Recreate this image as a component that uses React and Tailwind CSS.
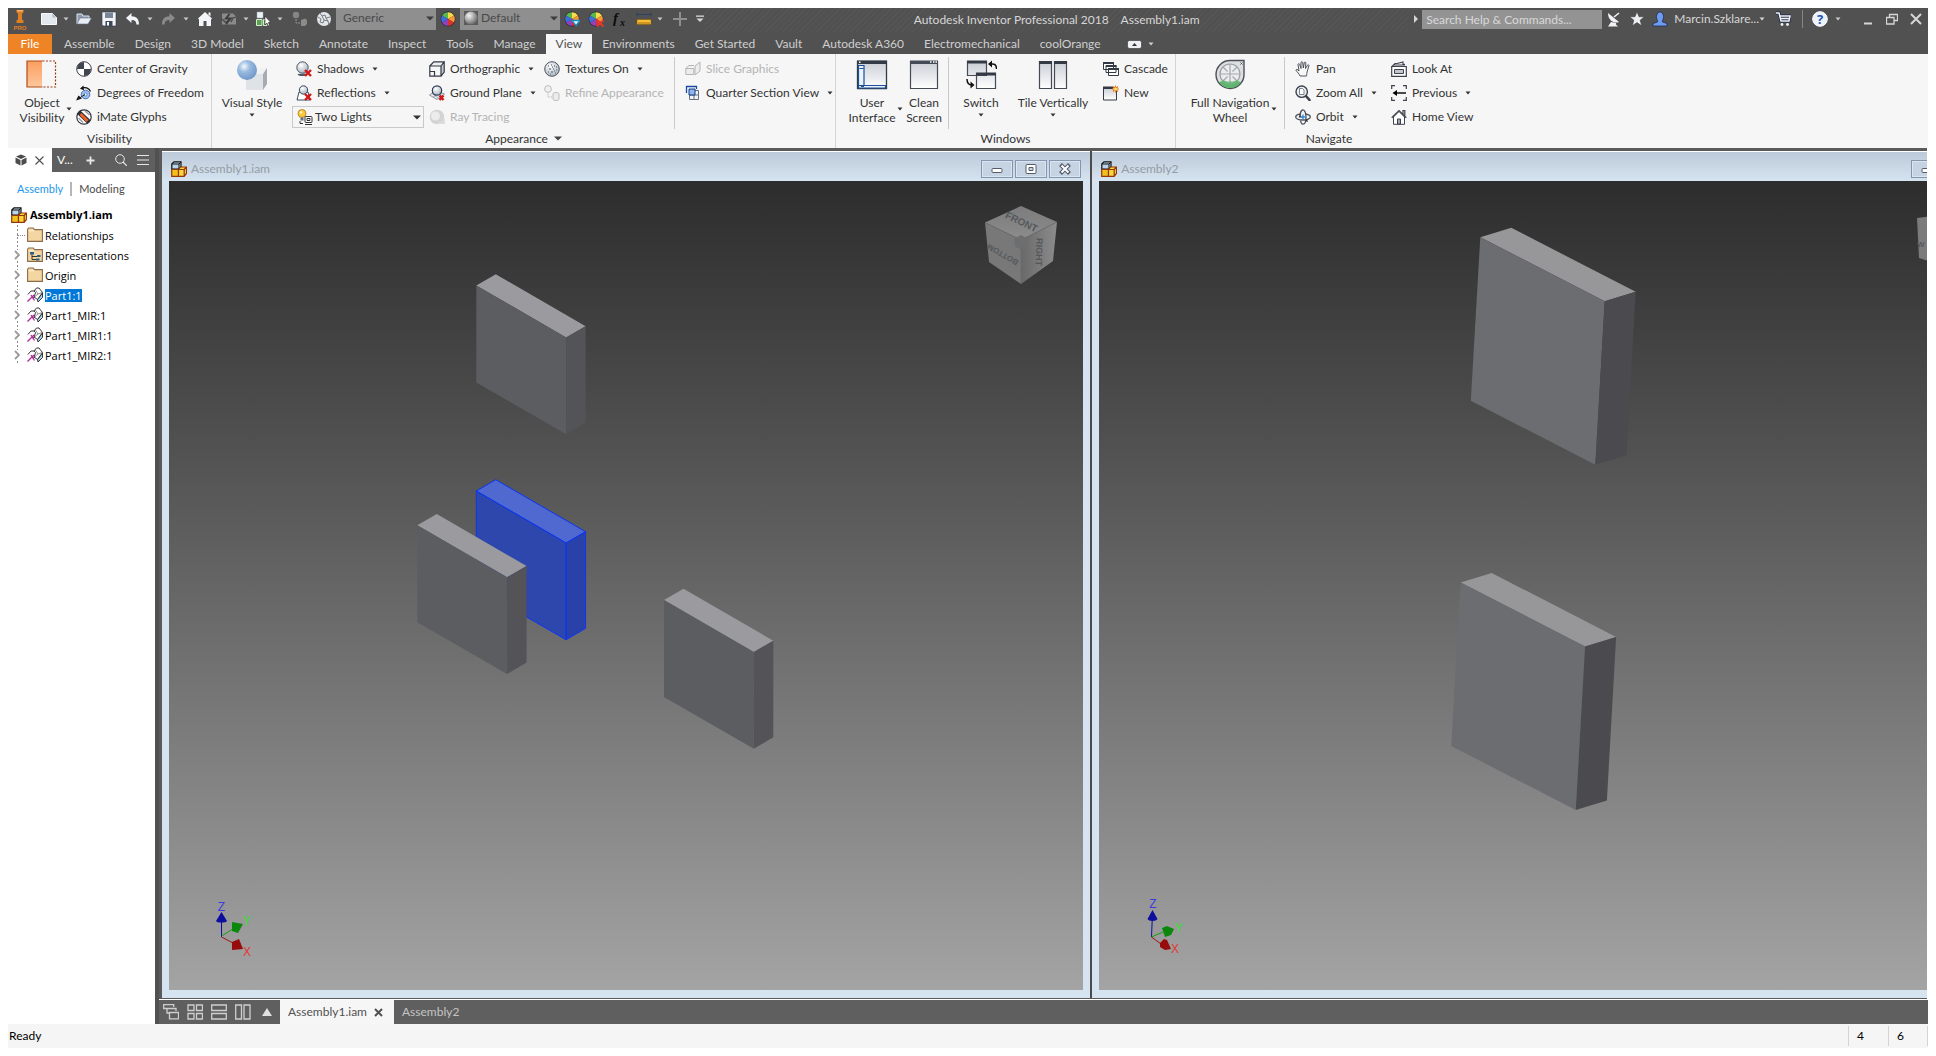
import React, { useState } from 'react';

const Svg = ({ size = 16, children, className = '' }) => (
  <svg width={size} height={size} viewBox={`0 0 ${size} ${size}`} fill="none" className={`shrink-0 ${className}`} aria-hidden="true">
    {children}
  </svg>
);

const Arrow = ({ className = '' }) => (
  <svg width="6" height="4" viewBox="0 0 6 4" className={`shrink-0 ${className}`} aria-hidden="true">
    <path d="M0.5 0.5h5L3 3.5z" fill="currentColor" />
  </svg>
);

const RedX = ({ x = 9, y = 9 }) => (
  <path d={`M${x} ${y}l6 6M${x + 6} ${y}l-6 6`} stroke="#d01818" strokeWidth="2.4" />
);

// Shared gradients used by several icons
const Defs = () => (
  <svg width="0" height="0" className="absolute" aria-hidden="true">
    <defs>
      <linearGradient id="steel" x1="0" y1="0" x2="0" y2="1">
        <stop offset="0" stopColor="#c9cdd4" />
        <stop offset="1" stopColor="#ffffff" />
      </linearGradient>
      <linearGradient id="orangeFade" x1="0" y1="0" x2="0" y2="1">
        <stop offset="0" stopColor="#fb9e5f" />
        <stop offset="1" stopColor="#fdc79d" />
      </linearGradient>
      <radialGradient id="ball" cx="0.38" cy="0.32" r="0.7">
        <stop offset="0" stopColor="#ffffff" />
        <stop offset="1" stopColor="#a9b4bf" />
      </radialGradient>
      <radialGradient id="blueBall" cx="0.36" cy="0.32" r="0.7">
        <stop offset="0" stopColor="#f6faff" />
        <stop offset="0.4" stopColor="#9bbbe0" />
        <stop offset="1" stopColor="#6f98c9" />
      </radialGradient>
      <radialGradient id="grayBall" cx="0.36" cy="0.32" r="0.7">
        <stop offset="0" stopColor="#f4f4f4" />
        <stop offset="1" stopColor="#6b6b6b" />
      </radialGradient>
      <linearGradient id="cubeRight" x1="0" y1="0" x2="1" y2="0">
        <stop offset="0" stopColor="#696969" />
        <stop offset="1" stopColor="#8c8c8c" />
      </linearGradient>
      <linearGradient id="cubeTop" x1="0" y1="0" x2="0" y2="1">
        <stop offset="0" stopColor="#7c7c7c" />
        <stop offset="1" stopColor="#8c8c8c" />
      </linearGradient>
    </defs>
  </svg>
);

/* ---------- quick access icons ---------- */

const InventorLogo = () => (
  <svg width="14" height="21" viewBox="0 0 14 21" aria-hidden="true">
    <path d="M3.5 1h7v2.6L9 4.5v6l1.5 1v2.5h-7v-2.5L5 10.500v-6L3.500 3.600z" fill="#e07f22" />
    <path d="M3.500 1h7l-1 1.500h-5z" fill="#f8b36b" />
    <text x="7" y="20.500" textAnchor="middle" fontSize="6" fontWeight="700" fill="#e07f22" fontFamily="Liberation Sans, sans-serif">PRO</text>
  </svg>
);

const NewIcon = () => (
  <Svg><path d="M0.500 2.500h11l4 4v7h-15z" fill="#e3e7ee" stroke="#f8f9fb" /><path d="M11.500 2.500v4h4z" fill="#aeb7c6" /></Svg>
);
const OpenIcon = () => (
  <Svg><path d="M1 13V3h5l1 2h6v2" fill="#8f9bad" stroke="#dfe5ee" /><path d="M1 13l3-6h11.500l-3.500 6z" fill="#e9eef5" stroke="#5d6f8a" strokeWidth="0.600" /></Svg>
);
const SaveIcon = () => (
  <Svg><path d="M1 1h14v14H2.500L1 13.500z" fill="#f1f3f7" stroke="#2a3550" strokeWidth="0.600" /><path d="M4 1.500h8V7H4z" fill="#7a8598" /><path d="M4.500 10h7v5h-7z" fill="#3c4658" /><path d="M6 11h2v3.500H6z" fill="#fff" /></Svg>
);
const UndoIcon = ({ color = '#f2f4f8', flip }) => (
  <svg width="16" height="16" viewBox="0 0 16 16" className={flip ? '-scale-x-100' : ''} aria-hidden="true">
    <path d="M1 7l5.500-5v3.200C11.500 5.200 14 8 14 13.500h-2.600C11.400 10.300 9.800 9 6.500 9v3z" fill={color} />
  </svg>
);
const HomeIcon = () => (
  <Svg><path d="M8 1l7 6.500-1 1V15H9.500v-5h-3v5H2V8.500l-1-1z" fill="#f3f5f9" /><path d="M11.500 1.500h2v4l-2-2z" fill="#f3f5f9" /></Svg>
);
const UpdateIcon = () => (
  <Svg><path d="M1 2.500h11l3 3v8H1z" fill="#8a8a8a" /><path d="M8.500 3L5 7.500h4.500L5 13" stroke="#3d3d3d" strokeWidth="2" /><path d="M1 8l3 3 3-1M15 6l-3 1-2 4" stroke="#474747" strokeWidth="1.300" /></Svg>
);
const SelectIcon = () => (
  <Svg><path d="M2 1h6v6H2z" fill="#f0f3f4" stroke="#9ab" strokeWidth="0.500" /><path d="M1.500 8.500h5.500v6H1.500zM8.500 8.500H12v6H8.500z" fill="#59a34d" stroke="#d7ead3" /><path d="M10 5v9l2-2 1.200 3 1.500-.6-1.300-2.900h2.400z" fill="#fff" stroke="#222" strokeWidth="0.600" /></Svg>
);
const TreeIcon = () => (
  <Svg><circle cx="4" cy="4" r="3.200" fill="#858585" /><path d="M4 8v4h4" stroke="#999" strokeDasharray="2 1" /><path d="M9 9l4-1.500L15 9v4l-2 2H9z" fill="#8b8b8b" /></Svg>
);
const GlobeIcon = () => (
  <Svg><circle cx="8" cy="8" r="7" fill="#e3e5e8" /><path d="M2 6l3 2-1 3 3 1 1-3 4 1 1 4M4 2l2 3 3-1 1 3 4-1M6 5l2 4M10 7l2 3" stroke="#6b7079" strokeWidth="0.900" /></Svg>
);
const WheelIcon = ({ children }) => (
  <Svg>
    <circle cx="8" cy="8" r="7.400" fill="#20252f" />
    <path d="M8 8L8 1.200A6.800 6.800 0 0 1 13.900 4.600z" fill="#f6dc4b" />
    <path d="M8 8L13.900 4.600A6.800 6.800 0 0 1 13.900 11.400z" fill="#f59a35" />
    <path d="M8 8L13.900 11.400A6.800 6.800 0 0 1 8 14.800z" fill="#d93030" />
    <path d="M8 8L8 14.800A6.800 6.800 0 0 1 2.100 11.400z" fill="#9440b8" />
    <path d="M8 8L2.100 11.400A6.800 6.800 0 0 1 2.100 4.600z" fill="#3f6ee0" />
    <path d="M8 8L2.100 4.600A6.800 6.800 0 0 1 8 1.200z" fill="#5cb64c" />
    {children}
  </Svg>
);
const FxIcon = () => (
  <svg width="16" height="16" viewBox="0 0 16 16" aria-hidden="true">
    <text x="1" y="12" fontSize="15" fontStyle="italic" fontWeight="700" fontFamily="Liberation Serif, serif" fill="#0c0c0c">f</text>
    <text x="8" y="15" fontSize="10" fontStyle="italic" fontWeight="700" fontFamily="Liberation Serif, serif" fill="#0c0c0c">x</text>
  </svg>
);
const MeasureIcon = () => (
  <Svg><path d="M1 3.500h14M1 1.500v4M15 1.500v4" stroke="#2b4163" /><path d="M1 8.500h14v5H1z" fill="#f7bd35" stroke="#7a4c00" strokeWidth="0.500" /><path d="M3 11v2M5 11v2M7 11v2M9 11v2M11 11v2M13 11v2" stroke="#8a5a00" strokeWidth="0.800" /></Svg>
);
const PlusIcon = () => (
  <Svg><path d="M8 1v14M1 8h14" stroke="#8f8f8f" strokeWidth="2" /></Svg>
);

/* ---------- ribbon icons, 16px ---------- */

const GravityIcon = () => (
  <Svg><circle cx="8" cy="8" r="7.300" fill="#fff" stroke="#3a3f48" /><path d="M8 8V1a7 7 0 0 0-7 7zM8 8v7a7 7 0 0 0 7-7z" fill="#3f444d" /></Svg>
);
const FreedomIcon = () => (
  <Svg><circle cx="9.500" cy="9.500" r="4.300" fill="#9fc0ee" stroke="#4471b5" /><circle cx="9.500" cy="9.500" r="1.600" fill="#e8f1ff" stroke="#4471b5" strokeWidth="0.700" /><path d="M5 3.500c4-2 8-.5 9.500 3" stroke="#111" strokeWidth="1.300" /><path d="M7.500 0.500L4 3.800l4 1.400zM0 15.500l6-2-3.500-3z" fill="#111" /><path d="M2 14l7-4.500" stroke="#222" /></Svg>
);
const IMateIcon = () => (
  <Svg><circle cx="8" cy="8" r="7.200" fill="#fff" stroke="#2f343c" strokeWidth="1.200" /><path d="M9 2l4.500 4M2.500 9L7 13.500" stroke="#9aa0aa" strokeWidth="1.600" /><path d="M2.500 3l10.500 10" stroke="#2b2f36" strokeWidth="4.600" /><path d="M4.500 5l7 7" stroke="#f0622a" strokeWidth="2.800" /></Svg>
);
const ShadowsIcon = () => (
  <Svg><path d="M1.500 13c1 2.500 6 2.500 8 1.500v-2z" fill="#4d586b" /><circle cx="6.500" cy="6.500" r="5.700" fill="url(#ball)" stroke="#4d5664" /><RedX /></Svg>
);
const ReflectionsIcon = () => (
  <Svg><path d="M1 15l2-8h9l2 8z" fill="#fff" stroke="#3b4a61" /><circle cx="7.500" cy="5" r="4.200" fill="url(#ball)" stroke="#3b4a61" /><RedX /></Svg>
);
const BulbIcon = () => (
  <Svg><circle cx="5" cy="4.500" r="4" fill="#fbc93c" stroke="#9c6a0a" strokeWidth="0.700" /><circle cx="4" cy="3.300" r="1.300" fill="#fff3c0" /><path d="M3.500 8.500h3v3h-3z" fill="#67707e" /><path d="M3 12v2.500h3" stroke="#333" /><rect x="8" y="7.500" width="7" height="6" rx="1" fill="#fff" stroke="#333" /><path d="M10 9.500h3v2h-3zM8 15.500h7" fill="#fff" stroke="#333" /></Svg>
);
const OrthoIcon = () => (
  <Svg><path d="M1 5l3.500-4H15L12 5z" fill="#eceef1" /><path d="M12 15l3-4V1l-3 4z" fill="#c3c8cf" /><path d="M0.800 5H12v10.200H0.800zM0.800 5l4-4.200h10.400L12 5M15.200 0.800V11L12 15.200" stroke="#333a45" strokeWidth="1.200" /><path d="M1 10.500h4.500V15" stroke="#333a45" strokeWidth="1.200" /></Svg>
);
const GroundIcon = () => (
  <Svg><path d="M0.500 10L7 5.500 15.500 9 8 14.500z" fill="#e8ebef" stroke="#8c95a3" /><path d="M3 8.500l7 5M6 6.500l7 4M4 12l8-5" stroke="#8c95a3" strokeWidth="0.700" /><circle cx="8" cy="5.500" r="4.700" fill="url(#ball)" stroke="#2e3d57" strokeWidth="1.200" /><path d="M10.500 10.500l4 4.500M14.500 10.500l-4 4.500" stroke="#d01818" strokeWidth="2.400" /></Svg>
);
const RayIcon = () => (
  <Svg><circle cx="8" cy="8" r="7.300" fill="#d3d3d3" /><circle cx="6.500" cy="7" r="4.500" fill="#ececec" /><path d="M9 14h6v-4" stroke="#dcdcdc" strokeWidth="2" /></Svg>
);
const TexturesIcon = () => (
  <Svg><circle cx="8" cy="8" r="7.300" fill="url(#ball)" stroke="#4f5661" /><path d="M4 5h1M7 4h1M10 5h1M5 8h2M9 8h1M12 9h1M4 11h1M7 11h2M11 12h1M8 6h1M10 10h1M6 13h1M12 6h1" stroke="#7b8490" strokeWidth="1.300" /></Svg>
);
const RefineIcon = () => (
  <Svg><circle cx="4" cy="4" r="3.400" fill="#efefef" stroke="#bdbdbd" /><path d="M4 8.500V12h4" stroke="#bdbdbd" strokeDasharray="2 1" /><path d="M9 9c0-2 6-2 6 0v5c0 2-6 2-6 0z" fill="#ececec" stroke="#bdbdbd" /></Svg>
);
const SliceIcon = () => (
  <Svg><path d="M0.800 7.500h8v6h-8zM0.800 7.500L4 4.500h5M10 5l5-4v9l-5 4z" fill="#ededed" stroke="#b4b4b4" /></Svg>
);
const QuarterIcon = () => (
  <Svg><path d="M4.500 5.500h9v9h-9zM4.500 10h9M9 5.500v9" fill="#f3f4f6" stroke="#67707e" /><path d="M4 4h6v6H4z" fill="#8fb7ee" stroke="#123a86" /><path d="M1.500 8V1.500h10V4" stroke="#1a49a8" strokeWidth="1.300" /></Svg>
);
const CascadeIcon = () => (
  <Svg>
    <path d="M0.500 1.500h10v7h-10zM3 4.500h10v7H3zM5.500 7.500h10v7h-10z" fill="#fff" stroke="#333a45" />
    <path d="M0 1h11v2H0zM3 4h10.500v2H3zM5 7h11v2H5z" fill="#333a45" />
  </Svg>
);
const NewWindowIcon = () => (
  <Svg><path d="M0.500 2.500h13v12.500h-13z" fill="url(#steel)" stroke="#333a45" /><path d="M0 1.500h10v2.500H0z" fill="#333a45" /><path d="M12.500 0.500v7M9 4h7M10 1.500l5 5M15 1.500l-5 5" stroke="#ec7a1c" strokeWidth="1.100" /><circle cx="12.500" cy="4" r="1.500" fill="#ffe45c" /></Svg>
);
const PanIcon = () => (
  <Svg><path d="M5 15c-.5-2-3-4-4.200-6 .7-1 2-.5 3.200 1L3 3.500c0-1 1.300-1.200 1.700 0L6 7.500V1.500c0-1 1.500-1 1.700 0L8.300 7l1-5.300c.2-1 1.600-.8 1.500.3L10.500 7.500l2-3.300c.6-.9 1.800-.3 1.400.7L12 11c0 2-.5 3-.5 4z" fill="#f7f7f7" stroke="#3d424b" strokeWidth="0.900" /></Svg>
);
const ZoomIcon = () => (
  <Svg><path d="M10.500 10.500l4 4.500" stroke="#3b414c" strokeWidth="2.600" strokeLinecap="round" /><circle cx="6.700" cy="6.700" r="5.700" fill="#e9f0f3" stroke="#3b414c" strokeWidth="1.400" /><path d="M4.500 3.500h3l1.500 1.500v4.500H4.500z" fill="#fff" stroke="#5b6470" strokeWidth="0.800" /></Svg>
);
const OrbitIcon = () => (
  <Svg><path d="M10 5c3 .3 5.300 1.500 5.300 3s-3 3-7.300 3-7.300-1.400-7.300-3S3 5.300 6 5" stroke="#4a515d" strokeWidth="1.300" /><path d="M5.500 11.500c.4 2.200 1.300 3.700 2.500 3.700 1.800 0 3-3.200 3-7.200S9.800 0.800 8 0.800 5 4 5 8" stroke="#4a515d" strokeWidth="1.300" /><path d="M3.500 8.500L5 6l1.800 2.500zM13 13l-3-1 2-2z" fill="#333" /><path d="M8 5.500v5M5.800 8h4.600" stroke="#2c86e0" strokeWidth="1.300" /></Svg>
);
const LookAtIcon = () => (
  <Svg><path d="M0.700 5.500h14.600v9.800H0.700z" fill="#fff" stroke="#3d424b" strokeWidth="1.200" /><path d="M3.500 8.500h9v4h-9z" fill="#c2c6cd" stroke="#3d424b" /><path d="M1 5.500l3-3h2l6-1.500v2l2 .5M3 4h11" stroke="#3d424b" strokeWidth="1.100" /></Svg>
);
const PreviousIcon = () => (
  <Svg><path d="M0.700 4V0.700H4M12 0.700h3.300V4M15.300 12v3.300H12M4 15.300H0.700V12" stroke="#3d424b" strokeWidth="1.200" /><path d="M5 8h10" stroke="#000" strokeWidth="1.400" /><path d="M1.500 8L6 5v6z" fill="#000" /></Svg>
);
const HomeViewIcon = () => (
  <Svg><path d="M2.500 8v7.300h11V8L8 2.500z" fill="#fff" stroke="#3d424b" /><path d="M0.700 8.700L8 1.500l7.300 7.200M12 5V1.500h1.800V7" stroke="#3d424b" strokeWidth="1.200" /><path d="M6.500 15v-5h3v5z" fill="#9fa5af" stroke="#3d424b" /></Svg>
);

/* ---------- ribbon icons, 32px ---------- */

const ObjectVisibilityIcon = () => (
  <Svg size={32}><path d="M1 2h15v26H1z" fill="url(#orangeFade)" /><path d="M16.500 2H1v26h15.500" stroke="#b04d1a" strokeWidth="1.200" /><path d="M16.500 2h13v26h-13" stroke="#a03c12" strokeWidth="1.200" strokeDasharray="2 1.500" /></Svg>
);
const VisualStyleIcon = () => (
  <Svg size={32}><path d="M10 15h17v16H10z" fill="#dfe2e6" /><path d="M10 15l6-6h15l-4 6z" fill="#f1f2f4" /><path d="M27 15l4-6v16l-4 6z" fill="#a7abb1" /><circle cx="11" cy="11" r="10" fill="url(#blueBall)" /></Svg>
);
const UserInterfaceIcon = () => (
  <Svg size={32}><path d="M1.500 2.500h29v27h-29z" fill="url(#steel)" stroke="#333a45" strokeWidth="1.300" /><path d="M1 1.500h30V5H1z" fill="#333a45" /><path d="M3 2.500h1.500V4H3z" fill="#fff" /><path d="M2.500 6.500h5.500v20H2.500zM2.500 26.500h27v2.500h-27z" fill="#eaf2ff" stroke="#1c4f93" strokeWidth="1.200" /><path d="M3.500 9.500h4M5 27.500h3" stroke="#1c4f93" /></Svg>
);
const CleanScreenIcon = () => (
  <Svg size={32}><path d="M2.500 2.500h27v27h-27z" fill="url(#steel)" stroke="#444b56" strokeWidth="1.200" /><path d="M2 1.500h28V5H2z" fill="#444b56" /><path d="M22 3h1.500M25 3h1.500M27.500 3H29" stroke="#fff" strokeWidth="1.300" /></Svg>
);
const SwitchIcon = () => (
  <Svg size={32}><path d="M2.500 2.500h19v14h-19zM11.500 14.500h19v15h-19z" fill="url(#steel)" stroke="#444b56" strokeWidth="1.200" /><path d="M2 1.500h20V4.500H2zM11 13.500h20v3H11z" fill="#333a45" /><path d="M26 5h1.500c3 0 4 2 4 5M2 20c0 4 1 6 5 6" stroke="#111" strokeWidth="1.500" /><path d="M23 5l4-3.500v7zM9.500 26L5.500 22.500v7z" fill="#111" /></Svg>
);
const TileIcon = () => (
  <Svg size={32}><path d="M2.500 2.500h12v27h-12zM17.500 2.500h12v27h-12z" fill="url(#steel)" stroke="#444b56" strokeWidth="1.200" /><path d="M2 2h13v3H2zM17 2h13v3H17z" fill="#333a45" /></Svg>
);
const WheelNavIcon = () => (
  <Svg size={32}>
    <path d="M16 1.500h14V15A14 14 0 1 1 16 1.500z" fill="#dcdedf" stroke="#4b5058" strokeWidth="1.400" />
    <path d="M5 23a13 13 0 0 0 22 0c-4-2-7 1-11 1s-7-3-11-1z" fill="#5cb76d" />
    <circle cx="16" cy="15" r="10" fill="#f1f2f2" fillOpacity="0.700" stroke="#9aa0a6" strokeWidth="1.200" />
    <path d="M16 5v20M6 15h20M9 8l4.500 4.500M23 8l-4.500 4.500M9 22l4.500-4.500M23 22l-4.500-4.500" stroke="#a2a8ae" strokeWidth="1.200" />
    <path d="M7 20a10 9 0 0 0 18 0c-3 2-6 2.500-9 2.500s-6-.5-9-2.500z" fill="#5cb76d" fillOpacity="0.800" />
    <path d="M26.500 3.500l2 2M28.500 3.500l-2 2" stroke="#444" strokeWidth="0.900" />
  </Svg>
);

/* ---------- browser icons ---------- */

const AssemblyIcon = () => (
  <Svg><path d="M0.800 3L3 0.800h7L10 6 8 8H0.800z" fill="#bcd4ea" stroke="#111" strokeWidth="1.200" /><path d="M1 3h7v5M8 3l2-2" stroke="#111" /><path d="M0.700 8.500h6.800v6.800H0.700z" fill="#f3c11d" stroke="#93380a" strokeWidth="1.200" /><path d="M7.500 8.500L9.500 6h6v6.500l-2.300 2.800H7.500zM7.500 8.500h5.700v6.800M13.200 8.500L15.500 6" fill="#fbd53d" stroke="#93380a" strokeWidth="1.200" /></Svg>
);
const FolderIcon = ({ tree }) => (
  <Svg>
    <path d="M0.600 14.400V2.200L1.700 1h4.600l1.100 1.600h8V14.400z" fill="#f3d6a2" stroke="#8c6c49" strokeWidth="1.100" />
    <path d="M1.500 3.800h6" stroke="#fff3da" />
    {tree && <path d="M3 5h4v2.500H3zM10 8h3.500v2H10zM9 11.500h3.500v2H9z" fill="#2f5f86" />}
    {tree && <path d="M5 7.500v5h4M5 9.500h5" stroke="#222" strokeWidth="0.900" />}
  </Svg>
);
const PartIcon = () => (
  <Svg>
    <path d="M10.500 12.500l5-6.500v4.500L11 15z" fill="#a9d4f0" stroke="#222" strokeWidth="0.900" />
    <path d="M6.500 4.500L9.500 1h2.500l3.500 4.500-5 7-3.500-2.500z" fill="#fff" stroke="#222" strokeWidth="0.900" />
    <path d="M8.500 3l2.500 4 4-1.500M11 7l-3.500 3" stroke="#666" strokeWidth="0.700" />
    <path d="M0.800 7.500L4 4h3l1.500 1.500-1 3.500L6 12" fill="#fff" stroke="#222" strokeWidth="0.900" />
    <path d="M0.500 14.500L7 8M4 8l3.500 5.500" stroke="#b8249f" strokeWidth="1.300" />
  </Svg>
);

/* ---------- title bar ---------- */

const QatButton = ({ label, className, children }) => (
  <button type="button" aria-label={label} className={`flex shrink-0 items-center justify-center ${className}`}>
    {children}
  </button>
);

const QatArrow = ({ label, className = 'w-4' }) => (
  <QatButton label={label} className={`h-5 text-[#c8c8c8] ${className}`}><Arrow /></QatButton>
);

const TitleSelect = ({ label, value, icon }) => (
  <div className="relative h-[22px] w-[100px] shrink-0 bg-[#8f8f8f] text-[#4a4a4a]">
    {icon && <span className="absolute left-1 top-[3px]"><Svg size={14}><path d="M0 0h14v14H0z" fill="#5b5b5b" /><circle cx="7" cy="7" r="6.500" fill="url(#grayBall)" /></Svg></span>}
    <select
      aria-label={label}
      defaultValue={value}
      className={`block h-[19px] w-full appearance-none bg-transparent text-xs leading-4 outline-none ${icon ? 'pl-[21px]' : 'pl-[7px]'}`}
    >
      <option>{value}</option>
    </select>
    <svg width="8" height="5" viewBox="0 0 8 5" className="pointer-events-none absolute right-[2px] top-2" aria-hidden="true"><path d="M0 0.500h8L4 4.500z" fill="#3c3c3c" /></svg>
  </div>
);

const TitleBar = () => (
  <header className="flex h-[26px] items-start bg-[#515151] text-[#d6d6d6]">
    <div className="flex h-[22px] shrink-0 items-center">
      <QatButton label="Inventor menu" className="mr-2 w-6"><InventorLogo /></QatButton>
      <QatButton label="New" className="w-[18px]"><NewIcon /></QatButton>
      <QatArrow label="New options" />
      <QatButton label="Open" className="w-5"><OpenIcon /></QatButton>
      <QatButton label="Save" className="w-[30px]"><SaveIcon /></QatButton>
      <QatButton label="Undo" className="w-[18px]"><UndoIcon /></QatButton>
      <QatArrow label="Undo list" />
      <QatButton label="Redo" className="w-5"><UndoIcon flip color="#8a8a8a" /></QatButton>
      <QatArrow label="Redo list" />
      <QatButton label="Home" className="w-[22px]"><HomeIcon /></QatButton>
      <QatButton label="Update" className="w-[26px]"><UpdateIcon /></QatButton>
      <QatArrow label="Update options" className="w-2" />
      <QatButton label="Select" className="w-[26px]"><SelectIcon /></QatButton>
      <QatArrow label="Select options" className="w-2" />
      <QatButton label="Component tree" className="w-8"><TreeIcon /></QatButton>
      <QatButton label="Material browser" className="mr-1 w-4"><GlobeIcon /></QatButton>
      <TitleSelect label="Material" value="Generic" />
      <QatButton label="Appearance browser" className="w-6"><WheelIcon /></QatButton>
      <TitleSelect label="Appearance" value="Default" icon />
      <QatButton label="Adjust appearance" className="w-6">
        <WheelIcon><path d="M8 9.500h8l-4 5z" fill="#e8f8ff" stroke="#1591cf" strokeWidth="1.300" /></WheelIcon>
      </QatButton>
      <QatButton label="Clear appearance" className="w-6">
        <WheelIcon><path d="M9 9l6.500 6.500M15.500 9L9 15.500" stroke="#e23a2c" strokeWidth="2" /></WheelIcon>
      </QatButton>
      <QatButton label="Parameters" className="w-6"><FxIcon /></QatButton>
      <QatButton label="Measure" className="w-6"><MeasureIcon /></QatButton>
      <QatArrow label="Measure options" className="w-2" />
      <QatButton label="Add" className="w-8"><PlusIcon /></QatButton>
      <QatButton label="Customize toolbar" className="w-2">
        <svg width="9" height="8" viewBox="0 0 9 8" aria-hidden="true"><path d="M0 0.800h9" stroke="#d6d6d6" strokeWidth="1.500" /><path d="M0.500 3.500h8l-4 4z" fill="#d6d6d6" /></svg>
      </QatButton>
    </div>
    <h1 className="flex h-6 min-w-0 flex-1 items-center justify-center gap-3 truncate bg-[repeating-linear-gradient(135deg,#565656_0_1px,#515151_1px_4px)] text-xs">
      <span>Autodesk Inventor Professional 2018</span>
      <span>Assembly1.iam</span>
    </h1>
    <div className="flex h-[22px] shrink-0 items-center">
      <QatButton label="Collapse search" className="w-[13px]">
        <svg width="4" height="8" viewBox="0 0 4 8" aria-hidden="true"><path d="M0 0l4 4-4 4z" fill="#d6d6d6" /></svg>
      </QatButton>
      <input
        type="search"
        aria-label="Search"
        placeholder="Search Help & Commands..."
        className="h-[19px] w-[180px] bg-[#939393] px-1 text-xs text-white outline-none placeholder:text-[#d8d8d8]"
      />
      <QatButton label="Subscription center" className="w-6">
        <Svg><path d="M2 2l11 9c-4 2-11-1-11-9z" fill="#f0f2f5" /><path d="M8 6l5-4" stroke="#f0f2f5" strokeWidth="1.600" /><path d="M2 15.500l3-4.500 5 1v1.500l2 2z" fill="#f0f2f5" /></Svg>
      </QatButton>
      <QatButton label="Favorites" className="w-[22px]">
        <Svg><path d="M8 0.800l2 5h5.300l-4.200 3.400 1.600 5.600L8 11.500l-4.700 3.300 1.600-5.600L0.700 5.800H6z" fill="#eef0f4" stroke="#333" strokeWidth="0.500" /></Svg>
      </QatButton>
      <button type="button" className="flex items-center gap-[2px] text-xs">
        <Svg className="mx-1"><path d="M1 15v-2.500l4.500-1.500V9.500C3.500 6.500 4.500 1 8 1s4.500 5.500 2.500 8.500V11l4.500 1.500V15z" fill="#6d9bf0" stroke="#1f2f58" strokeWidth="0.800" /></Svg>
        <span className="flex items-center">Marcin.Szklare...<Arrow /></span>
      </button>
      <QatButton label="App store" className="ml-[6px] w-6">
        <Svg><path d="M1 2h3l2 8h8l1-5H5" stroke="#18224b" strokeWidth="3" /><path d="M1 2h3l2 8h8l1-5H5M5.500 7.500h9" stroke="#f1f3f8" strokeWidth="1.500" /><circle cx="7" cy="13.500" r="1.400" fill="#f1f3f8" /><circle cx="12.500" cy="13.500" r="1.400" fill="#f1f3f8" /></Svg>
      </QatButton>
      <span className="ml-[7px] mr-[9px] h-[18px] w-px bg-[#858585]" />
      <QatButton label="Help" className="w-4">
        <svg width="16" height="16" viewBox="0 0 16 16" aria-hidden="true"><circle cx="8" cy="8" r="7.300" fill="#eef2fa" stroke="#fff" /><text x="8" y="12.500" textAnchor="middle" fontSize="13" fontWeight="700" fill="#2255b0" fontFamily="Open Sans, sans-serif">?</text></svg>
      </QatButton>
      <QatArrow label="Help options" className="w-5" />
      <QatButton label="Minimize" className="ml-2 h-6 w-6">
        <svg width="8" height="12" viewBox="0 0 8 12" aria-hidden="true"><path d="M0 10.500h8" stroke="#d6d6d6" strokeWidth="2" /></svg>
      </QatButton>
      <QatButton label="Restore" className="h-6 w-6">
        <Svg size={12}><path d="M3.500 5V1.500h8v6H8M0.500 4.500h7.500v6.500H0.500z" stroke="#d6d6d6" strokeWidth="1.300" /></Svg>
      </QatButton>
      <QatButton label="Close" className="h-6 w-6">
        <Svg size={12}><path d="M1 1l10 10M11 1L1 11" stroke="#d6d6d6" strokeWidth="2" /></Svg>
      </QatButton>
    </div>
  </header>
);

/* ---------- ribbon ---------- */

const TABS = [
  'Assemble', 'Design', '3D Model', 'Sketch', 'Annotate', 'Inspect', 'Tools', 'Manage', 'View',
  'Environments', 'Get Started', 'Vault', 'Autodesk A360', 'Electromechanical', 'coolOrange',
];

const RibbonTabs = () => {
  const [active, setActive] = useState('View');
  return (
    <nav className="flex h-5 items-stretch bg-[#515151] text-xs text-[#cfcfcf]">
      <button type="button" className="mr-[2px] w-11 bg-[#ef8427] text-white">File</button>
      {TABS.map((tab) => (
        <button
          type="button"
          key={tab}
          onClick={() => setActive(tab)}
          className={`px-[10px] ${tab === active ? 'bg-[#f6f6f6] text-[#505050]' : ''}`}
        >
          {tab}
        </button>
      ))}
      <button type="button" aria-label="Minimize ribbon" className="ml-4 flex items-center gap-[6px]">
        <svg width="15" height="9" viewBox="0 0 15 9" aria-hidden="true"><rect x="0.500" y="0.500" width="14" height="8" rx="2" fill="#eef0f4" stroke="#333" strokeWidth="0.600" /><path d="M5 6l2.500-3L10 6z" fill="#333" /></svg>
        <Arrow />
      </button>
    </nav>
  );
};

const Tool = ({ icon: Icon, label, arrow, disabled }) => (
  <button
    type="button"
    disabled={disabled}
    className={`flex h-6 items-center gap-[5px] whitespace-nowrap ${disabled ? 'text-[#b4b4b4]' : ''}`}
  >
    <Icon />
    <span>{label}</span>
    {arrow && <Arrow className="ml-[3px]" />}
  </button>
);

const BigTool = ({ icon: Icon, lines, arrow, className }) => (
  <button type="button" className={`flex shrink-0 flex-col items-center pt-[2px] leading-[15px] ${className}`}>
    <Icon />
    <span className="relative mt-1 whitespace-nowrap">
      {lines.map((line) => <span key={line} className="block">{line}</span>)}
      {arrow && lines.length > 1 && <Arrow className="absolute -right-2 top-3" />}
    </span>
    {arrow && lines.length === 1 && <Arrow className="mt-[3px]" />}
  </button>
);

const Panel = ({ title, arrow, className, children }) => (
  <section className={`flex shrink-0 flex-col border-r border-[#d4d4d4] ${className}`}>
    <div className="flex h-[75px] items-start pt-[3px]">{children}</div>
    <h2 className="flex h-5 items-center justify-center gap-[6px]">
      {title}
      {arrow && <svg width="8" height="5" viewBox="0 0 8 5" aria-hidden="true"><path d="M0 0.500h8L4 4.500z" fill="#444" /></svg>}
    </h2>
  </section>
);

const Separator = () => <span className="h-[72px] w-px shrink-0 bg-[#c9c9c9]" />;

const Ribbon = () => (
  <div className="flex h-[94px] shrink-0 overflow-hidden bg-[#f6f6f6] text-xs text-[#333333]">
    <Panel title="Visibility" className="w-[204px]">
      <BigTool icon={ObjectVisibilityIcon} lines={['Object', 'Visibility']} arrow className="w-[68px]" />
      <div className="flex flex-col">
        <Tool icon={GravityIcon} label="Center of Gravity" />
        <Tool icon={FreedomIcon} label="Degrees of Freedom" />
        <Tool icon={IMateIcon} label="iMate Glyphs" />
      </div>
    </Panel>

    <Panel title="Appearance" arrow className="w-[624px]">
      <BigTool icon={VisualStyleIcon} lines={['Visual Style']} arrow className="w-20" />
      <div className="flex w-[132px] flex-col">
        <div className="pl-1"><Tool icon={ShadowsIcon} label="Shadows" arrow /></div>
        <div className="pl-1"><Tool icon={ReflectionsIcon} label="Reflections" arrow /></div>
        <div className="relative my-px flex h-[22px] items-center border border-[#c9c9c9]">
          <span className="absolute left-1"><BulbIcon /></span>
          <select aria-label="Lighting style" defaultValue="Two Lights" className="h-full w-full appearance-none bg-transparent pl-[22px] outline-none">
            <option>Two Lights</option>
          </select>
          <svg width="8" height="5" viewBox="0 0 8 5" className="pointer-events-none absolute right-[2px]" aria-hidden="true"><path d="M0 0.500h8L4 4.500z" fill="#333" /></svg>
        </div>
      </div>
      <div className="flex w-[120px] flex-col pl-[5px]">
        <Tool icon={OrthoIcon} label="Orthographic" arrow />
        <Tool icon={GroundIcon} label="Ground Plane" arrow />
        <Tool icon={RayIcon} label="Ray Tracing" disabled />
      </div>
      <div className="flex w-[130px] flex-col">
        <Tool icon={TexturesIcon} label="Textures On" arrow />
        <Tool icon={RefineIcon} label="Refine Appearance" disabled />
      </div>
      <Separator />
      <div className="flex flex-col pl-[10px]">
        <Tool icon={SliceIcon} label="Slice Graphics" disabled />
        <Tool icon={QuarterIcon} label="Quarter Section View" arrow />
      </div>
    </Panel>

    <Panel title="Windows" className="w-[340px]">
      <BigTool icon={UserInterfaceIcon} lines={['User', 'Interface']} arrow className="ml-1 w-16" />
      <BigTool icon={CleanScreenIcon} lines={['Clean', 'Screen']} className="mr-1 w-10" />
      <Separator />
      <BigTool icon={SwitchIcon} lines={['Switch']} arrow className="w-[64px]" />
      <BigTool icon={TileIcon} lines={['Tile Vertically']} arrow className="w-20" />
      <div className="flex flex-col pl-[10px]">
        <Tool icon={CascadeIcon} label="Cascade" />
        <Tool icon={NewWindowIcon} label="New" />
      </div>
    </Panel>

    <section className="flex w-[306px] shrink-0 flex-col">
      <div className="flex h-[75px] items-start pt-[3px]">
        <BigTool icon={WheelNavIcon} lines={['Full Navigation', 'Wheel']} arrow className="w-[108px]" />
        <Separator />
        <div className="flex w-[106px] flex-col pl-[10px]">
          <Tool icon={PanIcon} label="Pan" />
          <Tool icon={ZoomIcon} label="Zoom All" arrow />
          <Tool icon={OrbitIcon} label="Orbit" arrow />
        </div>
        <div className="flex flex-col">
          <Tool icon={LookAtIcon} label="Look At" />
          <Tool icon={PreviousIcon} label="Previous" arrow />
          <Tool icon={HomeViewIcon} label="Home View" />
        </div>
      </div>
      <h2 className="flex h-5 items-center justify-center">Navigate</h2>
    </section>
  </div>
);

/* ---------- model browser ---------- */

const NODES = [
  { name: 'Relationships', icon: 'folder' },
  { name: 'Representations', icon: 'tree', expandable: true },
  { name: 'Origin', icon: 'folder', expandable: true },
  { name: 'Part1:1', icon: 'part', expandable: true },
  { name: 'Part1_MIR:1', icon: 'part', expandable: true },
  { name: 'Part1_MIR1:1', icon: 'part', expandable: true },
  { name: 'Part1_MIR2:1', icon: 'part', expandable: true },
];

const Browser = () => {
  const [selected, setSelected] = useState('Part1:1');
  return (
    <aside className="flex w-[147px] shrink-0 flex-col bg-white text-[11px] text-black">
      <div className="flex h-6 shrink-0 items-center bg-[#5f5f5f] text-white">
        <div className="flex h-full w-11 items-center justify-between bg-white pl-[7px] pr-2">
          <Svg size={12}><path d="M6 0.500l5 2L6 5 1 2.500zM0.500 3.500L5.500 6v5.500L0.500 9zM11.500 3.500L6.500 6v5.500l5-2.500z" fill="#4c4c4c" /></Svg>
          <button type="button" aria-label="Close browser"><Svg size={9}><path d="M0.500 0.500l8 8M8.500 0.500l-8 8" stroke="#4c4c4c" strokeWidth="1.100" /></Svg></button>
        </div>
        <button type="button" className="w-[30px] pl-[5px] text-left text-xs">V...</button>
        <button type="button" aria-label="Add tab" className="flex w-[17px] justify-center"><Svg size={9}><path d="M4.500 0.500v8M0.500 4.500h8" stroke="#e8e8e8" strokeWidth="1.800" /></Svg></button>
        <button type="button" aria-label="Search browser" className="ml-4"><Svg size={12}><circle cx="5" cy="5" r="4.300" stroke="#e8e8e8" /><path d="M8 8l4 4" stroke="#e8e8e8" strokeWidth="1.200" /></Svg></button>
        <button type="button" aria-label="Browser menu" className="ml-[10px]"><Svg size={12}><path d="M0 1.500h12M0 6h12M0 10.500h12" stroke="#e8e8e8" strokeWidth="1.200" /></Svg></button>
      </div>
      <div className="flex items-center pl-[9px] pt-[9px] leading-4">
        <button type="button" className="text-[#1c97ea]">Assembly</button>
        <span className="mx-[7px] h-[14px] w-[2px] bg-[#b5b5b5]" />
        <button type="button" className="text-[#4a4a4a]">Modeling</button>
      </div>
      <div className="mt-2 flex h-5 items-center gap-[3px] pl-[3px] font-['Open_Sans','Noto_Sans',sans-serif] font-bold"><AssemblyIcon />Assembly1.iam</div>
      <ul className="ml-[9px] font-['Open_Sans','Noto_Sans',sans-serif]">
        {NODES.map((node) => (
          <li key={node.name} className="flex h-5 items-center bg-[linear-gradient(#8a8a8a_50%,transparent_50%)] bg-[length:1px_4px] bg-repeat-y">
            <span className="flex w-[10px] shrink-0 items-center justify-start">
              {node.expandable
                ? <svg width="6" height="10" viewBox="0 0 6 10" className="-ml-[3px] bg-white" aria-hidden="true"><path d="M1 1l4 4-4 4" fill="none" stroke="#9b9b9b" strokeWidth="1.800" /></svg>
                : <span className="h-px w-2 border-t border-dotted border-[#8a8a8a]" />}
            </span>
            {node.icon === 'part' ? <PartIcon /> : <FolderIcon tree={node.icon === 'tree'} />}
            <button
              type="button"
              onClick={() => setSelected(node.name)}
              className={`ml-[2px] leading-[13px] ${selected === node.name ? 'bg-[#0078d7] text-white' : ''}`}
            >
              {node.name}
            </button>
          </li>
        ))}
      </ul>
    </aside>
  );
};

/* ---------- document windows ---------- */

const Block = ({ x, y, top = '#9b9a9e', front = '#5c5d60', side = '#545358', stroke = 'none' }) => (
  <g transform={`translate(${x} ${y})`} stroke={stroke}>
    <polygon points="0,0 19.500,-11.300 109.300,40.700 89.800,52" fill={top} />
    <polygon points="0,0 89.800,52 89.800,148.700 0,97" fill={front} />
    <polygon points="89.800,52 109.300,40.700 109.300,137.300 89.800,148.700" fill={side} />
  </g>
);

const LargeBlock = ({ x, y }) => (
  <g transform={`translate(${x} ${y})`}>
    <polygon points="0,0 31,-9.500 155.400,54.500 124.400,64" fill="#979799" />
    <polygon points="0,0 124.400,64 115,227.400 -9.500,163.500" fill="#6c6d71" />
    <polygon points="124.400,64 155.400,54.500 146.200,218 115,227.400" fill="#4b4a4e" />
  </g>
);

const AssemblyScene = () => (
  <svg className="block h-full w-full" aria-label="Assembly1 model">
    <Block x={307.3} y={104.5} />
    <Block x={307.3} y={310} top="#4f69d0" front="#2d47ad" side="#2a41a9" stroke="#0a35f5" />
    <Block x={248.3} y={344.3} />
    <Block x={495} y={419} />
  </svg>
);

const SecondScene = () => (
  <svg className="block h-full w-full" aria-label="Assembly2 model">
    <LargeBlock x={381.3} y={56.3} />
    <LargeBlock x={361.7} y={401.5} />
  </svg>
);

const Triad = () => (
  <svg width="50" height="60" viewBox="0 0 50 60" className="absolute bottom-[30px] left-10" aria-hidden="true" fontFamily="Liberation Sans, sans-serif" fontSize="12" textAnchor="middle">
    <path d="M12.500 37V13" stroke="#0d0d9e" /><path d="M12.500 12l5.500 9c-1 2-10 2-11 0z" fill="#0d0d9e" />
    <path d="M12.500 36L24 29" stroke="#12a012" /><path d="M23 22l11 2-5 9-6-2z" fill="#0b870b" />
    <path d="M12.500 37L24 43" stroke="#a31212" /><path d="M23 42l7-3 4 10-11 1z" fill="#970c0c" />
    <text x="12.500" y="11" fill="#3b3be0">Z</text>
    <text x="38" y="25" fill="#35e035">Y</text>
    <text x="38" y="56" fill="#e53535">X</text>
  </svg>
);

const SlimTriad = () => (
  <svg width="50" height="64" viewBox="0 -4 50 64" className="absolute bottom-[30px] left-10" aria-hidden="true" fontFamily="Liberation Sans, sans-serif" fontSize="12" textAnchor="middle">
    <path d="M12.500 37L13.500 13" stroke="#0d0d9e" /><path d="M13.500 10l5 9c-1 2.500-9 2.500-10 0z" fill="#0d0d9e" />
    <path d="M12.500 37L24 32" stroke="#12a012" /><path d="M23 28l5-2 7 3-3 6-6 2z" fill="#0b870b" />
    <path d="M12.500 37L22 44" stroke="#a31212" /><path d="M21 43l4-4 3 1 4 9-6 1-5-3z" fill="#970c0c" />
    <text x="14" y="8" fill="#3b3be0">Z</text>
    <text x="40" y="32" fill="#35e035">Y</text>
    <text x="36" y="53" fill="#e53535">X</text>
  </svg>
);

const ViewCube = () => (
  <svg width="76" height="82" viewBox="0 0 76 82" className="absolute right-[23px] top-6" aria-label="View cube" fontFamily="Liberation Sans, sans-serif" fontWeight="700" fill="#55585c">
    <polygon points="37,1 73,17 37,35 1,17.500" fill="url(#cubeTop)" />
    <polygon points="1,17.500 37,35 37,79 5,57" fill="#787878" />
    <polygon points="37,35 73,17 69,56 37,79" fill="url(#cubeRight)" />
    <path d="M1 17.500L37 35L73 17M37 35v44" stroke="#6a6a6a" strokeWidth="0.600" fill="none" />
    <polygon points="37,30 44,34 43,41 37,45 31,41 30,34" fill="#6c6e70" />
    <text fontSize="10" textAnchor="middle" transform="translate(36 20) rotate(26)">FRONT</text>
    <text fontSize="8" textAnchor="middle" transform="translate(20 47) rotate(210)">BOTTOM</text>
    <text fontSize="9" textAnchor="middle" transform="translate(52 47) rotate(92)">RIGHT</text>
  </svg>
);

const SideCube = () => (
  <svg width="76" height="60" viewBox="0 0 76 60" className="absolute right-[20px] top-8" aria-label="View cube">
    <polygon points="0,5 38,0 76,6 72,46 38,56 2,45" fill="#7b7b7b" />
    <text x="0" y="34" fontSize="8" fontWeight="700" fill="#55585c" fontFamily="Liberation Sans, sans-serif">W</text>
  </svg>
);

const CaptionButton = ({ label, children }) => (
  <button type="button" aria-label={label} className="flex h-[18px] w-8 items-center justify-center border border-[#8495b0] bg-[#c6d3e2] shadow-[inset_0_0_0_1px_#dbe5ef]">
    {children}
  </button>
);

const DocumentWindow = ({ title, children }) => (
  <section className="flex w-[52.7%] shrink-0 flex-col border-r-2 border-[#4b4b4b] bg-[#d6e4f1]">
    <div className="flex h-[30px] shrink-0 items-center border-t border-white bg-linear-to-b from-[#bccad9] to-[#d6e4f1] px-[9px] pt-1">
      <AssemblyIcon />
      <h2 className="ml-1 text-xs text-[#949ca4]">{title}</h2>
      <div className="ml-auto flex gap-[2px]">
        <CaptionButton label="Minimize"><Svg size={12}><rect x="1" y="5.500" width="10" height="4" rx="1" fill="#fff" stroke="#535a68" /></Svg></CaptionButton>
        <CaptionButton label="Maximize"><Svg size={12}><rect x="1" y="1.500" width="10" height="9" rx="1" fill="#fff" stroke="#535a68" /><path d="M4 4.500h4v3H4z" fill="#c6d3e2" stroke="#535a68" /></Svg></CaptionButton>
        <CaptionButton label="Close"><Svg size={12}><path d="M1.500 1.500l9 9M10.500 1.500l-9 9" stroke="#535a68" strokeWidth="4" /><path d="M2.500 2.500l7 7M9.500 2.500l-7 7" stroke="#fff" strokeWidth="2" /></Svg></CaptionButton>
      </div>
    </div>
    <div className="relative mx-[7px] mb-2 min-h-0 flex-1 overflow-hidden bg-linear-to-b from-[#2d2d2d] to-[#a4a4a4]">
      {children}
    </div>
  </section>
);

const DocumentTabs = () => (
  <div className="flex h-6 shrink-0 items-stretch bg-[#5f5f5f] text-xs text-[#c4c4c4]">
    <div className="flex items-center gap-2 pl-1">
      <button type="button" aria-label="Cascade windows"><Svg><path d="M4 4.500H0.700V0.700h10V3M7 9H4V4.500h9V7M6.500 8.500h9v6.300h-9z" stroke="#cfcfcf" strokeWidth="1.300" /></Svg></button>
      <button type="button" aria-label="Arrange windows"><Svg><path d="M1 1h6v5.500H1zM9.500 1h6v5.500h-6zM1 9.500h6V15H1zM9.500 9.500h6V15h-6z" stroke="#cfcfcf" strokeWidth="1.300" /></Svg></button>
      <button type="button" aria-label="Tile horizontally"><Svg><path d="M0.700 1h14.600v5.500H0.700zM0.700 9.500h14.600V15H0.700z" stroke="#cfcfcf" strokeWidth="1.300" /></Svg></button>
      <button type="button" aria-label="Tile vertically"><Svg><path d="M0.700 1h5.800v14H0.700zM9 1h6v14H9z" stroke="#cfcfcf" strokeWidth="1.300" /></Svg></button>
      <button type="button" aria-label="More windows" className="flex w-[21px] items-center"><svg width="10" height="8" viewBox="0 0 10 8" className="ml-[3px]" aria-hidden="true"><path d="M5 0l5 8H0z" fill="#e0e0e0" /></svg></button>
    </div>
    <div className="flex w-[114px] items-center justify-between bg-[#f6f6f6] pl-2 pr-[11px] text-[#515151]">
      <button type="button">Assembly1.iam</button>
      <button type="button" aria-label="Close Assembly1.iam"><Svg size={9}><path d="M1 1l7 7M8 1L1 8" stroke="#515151" strokeWidth="2" /></Svg></button>
    </div>
    <button type="button" className="px-2">Assembly2</button>
  </div>
);

const App = () => (
  <div className="flex h-screen flex-col bg-white p-2 font-[Lato,'Open_Sans',sans-serif]">
    <Defs />
    <TitleBar />
    <RibbonTabs />
    <Ribbon />
    <div className="flex min-h-0 flex-1">
      <Browser />
      <main className="flex min-w-0 flex-1 flex-col border-l-4 border-[#515151]">
        <div className="mb-px mr-px flex min-h-0 flex-1 overflow-hidden border-t-[3px] border-b border-l-[3px] border-[#5a5a5a]">
          <DocumentWindow title="Assembly1.iam">
            <AssemblyScene />
            <ViewCube />
            <Triad />
          </DocumentWindow>
          <DocumentWindow title="Assembly2">
            <SecondScene />
            <SideCube />
            <SlimTriad />
          </DocumentWindow>
        </div>
        <DocumentTabs />
      </main>
    </div>
    <footer className="flex h-6 shrink-0 items-center bg-[#f5f5f5] text-xs text-black">
      <span className="flex-1 pl-px">Ready</span>
      <span className="flex h-5 w-10 items-center border-l border-[#d4d4d4] pl-2">4</span>
      <span className="flex h-5 w-10 items-center border-x border-[#d4d4d4] pl-2">6</span>
    </footer>
  </div>
);

export default App;
